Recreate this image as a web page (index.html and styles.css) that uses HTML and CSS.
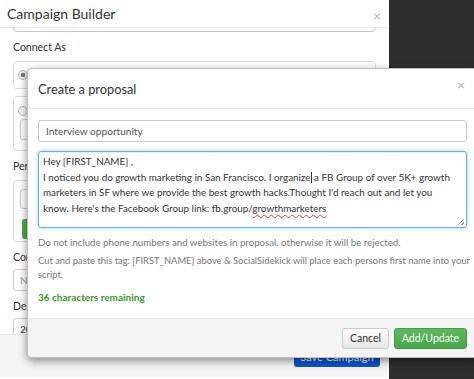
FILE: index.html
```html
<!DOCTYPE html>
<html lang="en">
<head>
    <meta charset="UTF-8">
    <title>Campaign Builder</title>
    <link rel="stylesheet" href="styles.css">
</head>
<body>
    <div class="page">
        <div class="builder">
            <div class="builder-header">
                <span class="builder-title">Campaign Builder</span>
                <span class="builder-close">&times;</span>
            </div>
            <div class="builder-body">
                <div class="box box-tail"></div>
                <div class="label">Connect As</div>
                <div class="box box-radio">
                    <span class="radio checked"></span>
                </div>
                <div class="box box-account">
                    <span class="radio"></span>
                    <div class="field">Linkedin</div>
                </div>
                <div class="label">Personalize</div>
                <div class="box box-tags">
                    <div class="field field-small">Tag</div>
                    <div class="green-small"></div>
                </div>
                <div class="label">Connect</div>
                <div class="field field-plain placeholder">Nice</div>
                <div class="label">Delay</div>
                <div class="field field-plain">20</div>
            </div>
            <div class="builder-footer">
                <button class="save-button">Save Campaign</button>
            </div>
        </div>
        <div class="dark-side"></div>
    </div>

    <div class="proposal">
        <div class="proposal-header">
            <h4>Create a proposal</h4>
            <span class="proposal-close">&times;</span>
        </div>
        <div class="proposal-body">
            <div class="input">Interview opportunity</div>
            <div class="textarea">
                Hey [FIRST_NAME] ,<br>
                I noticed you do growth marketing in San Francisco. I organize<span class="caret"></span> a FB Group of over 5K+ growth<br>
                marketers in SF where we provide the best growth hacks.Thought I'd reach out and let you<br>
                know. Here's the Facebook Group link: fb.group/<span class="misspelled">growthmarketers</span>
                <span class="grip"></span>
            </div>
            <p class="help">Do not include phone numbers and websites in proposal, otherwise it will be rejected.</p>
            <p class="help help-long">Cut and paste this tag: [FIRST_NAME] above &amp; SocialSidekick will place each persons first name into your<br>script.</p>
            <p class="remaining">36 characters remaining</p>
        </div>
        <div class="proposal-footer">
            <button class="cancel-button">Cancel</button>
            <button class="add-button">Add/Update</button>
        </div>
    </div>
</body>
</html>
```

FILE: styles.css
```css
html, body {
    margin: 0;
    height: 379px;
    overflow: hidden;
}
body {
    font-family: Lato, "Open Sans", sans-serif;
    color: #333;
    background: #2e2e2e;
}
.page {
    display: flex;
    height: 379px;
}
.builder {
    width: 389px;
    background: #fff;
    display: flex;
    flex-direction: column;
}
.builder-header {
    height: 27px;
    border-bottom: 1px solid #e8e8e8;
    display: flex;
    align-items: center;
    justify-content: space-between;
    padding: 0 8px 0 7px;
}
.builder-title {
    font-size: 14px;
}
.builder-close {
    color: #b5b5b5;
    font-size: 14px;
    margin-top: 4px;
}
.builder-body {
    flex: 1;
    overflow: hidden;
    padding: 0 13px;
}
.box {
    border: 1px solid #dcdcdc;
    border-radius: 4px;
    margin-top: 7px;
}
.box-tail {
    margin-top: -6px;
    height: 8px;
    border-color: #c8c8c8;
}
.label {
    font-size: 10.5px;
    line-height: 14px;
    margin-top: 8px;
    white-space: nowrap;
}
.box-radio {
    height: 26px;
    display: flex;
    align-items: center;
    padding-left: 4px;
}
.box-account {
    height: 55px;
    box-sizing: border-box;
    padding: 9px 6px 0 4px;
}
.radio {
    display: block;
    width: 8px;
    height: 8px;
    border-radius: 50%;
    border: 1px solid #b8b8b8;
    background: #f2f2f2;
}
.radio.checked {
    background: radial-gradient(circle, #777 0 2px, #eee 2.5px);
}
.field {
    border: 1px solid #ccc;
    border-radius: 3px;
    height: 19px;
    line-height: 19px;
    font-size: 10px;
    padding-left: 6px;
    margin-top: 3px;
    margin-left: 2px;
    white-space: nowrap;
    overflow: hidden;
}
.box-tags {
    height: 62px;
    box-sizing: border-box;
    padding: 8px 6px 0 6px;
}
.field-small {
    margin: 0;
    height: 18px;
}
.green-small {
    width: 60px;
    height: 20px;
    margin: 10px 0 0 2px;
    background: #4cae4c;
    border-radius: 3px;
}
.field-plain {
    margin: 5px 0 0 0;
    height: 20px;
    line-height: 20px;
}
.placeholder {
    color: #999;
}
.builder-footer {
    height: 42px;
    border-top: 1px solid #e5e5e5;
    background: #f5f5f5;
    display: flex;
    align-items: center;
    justify-content: flex-end;
    padding-right: 9px;
    margin-bottom: 2px;
}
.save-button {
    background: #0b55cf;
    color: #fff;
    border: none;
    border-radius: 3px;
    font-family: inherit;
    font-size: 11px;
    width: 86px;
    height: 22px;
}
.dark-side {
    flex: 1;
    background: #2e2e2e;
}

/* proposal modal */
.proposal {
    position: absolute;
    left: 27px;
    top: 68px;
    width: 449px;
    background: #fff;
    border: 1px solid rgba(0, 0, 0, 0.25);
    border-radius: 5px;
    box-shadow: 0 3px 9px rgba(0, 0, 0, 0.45);
}
.proposal-header {
    height: 39px;
    border-bottom: 1px solid #e5e5e5;
    display: flex;
    align-items: center;
    justify-content: space-between;
    padding: 0 11px 0 10px;
}
.proposal-header h4 {
    margin: 0;
    font-size: 12.8px;
    font-weight: normal;
}
.proposal-close {
    color: #b0b0b0;
    font-size: 14px;
    margin-top: -8px;
    margin-right: 1px;
}
.proposal-body {
    padding: 11px 11px 0 10px;
}
.input {
    height: 20px;
    line-height: 20px;
    border: 1px solid #ccc;
    border-radius: 3px;
    padding-left: 7px;
    font-size: 10.1px;
    color: #555;
    margin-right: -1px;
}
.textarea {
    position: relative;
    margin-top: 9px;
    height: 66px;
    border: 1px solid #66afe9;
    border-radius: 3px;
    box-shadow: inset 0 1px 1px rgba(0, 0, 0, 0.07), 0 0 4px rgba(102, 175, 233, 0.6);
    padding: 2px 4px 7px 4px;
    font-size: 9.9px;
    line-height: 15.6px;
    color: #333;
    white-space: nowrap;
    overflow: hidden;
    margin-right: -1px;
}
.caret {
    display: inline-block;
    width: 1px;
    height: 11px;
    background: #333;
    vertical-align: -2px;
}
.misspelled {
    text-decoration: underline wavy #e04040;
    text-decoration-thickness: 1px;
    text-underline-offset: 2px;
}
.grip {
    position: absolute;
    right: 2px;
    bottom: 2px;
    width: 6px;
    height: 6px;
    background: linear-gradient(135deg, transparent 45%, #999 45%, #999 55%, transparent 55%, transparent 75%, #999 75%, #999 85%, transparent 85%);
}
.help {
    margin: 7px 0 0 0;
    font-size: 9.7px;
    line-height: 14px;
    color: #777;
    white-space: nowrap;
}
.help + .help {
    margin-top: 5px;
}
.help-long {
    font-size: 9.4px;
}
.remaining {
    margin: 8px 0 0 0;
    font-size: 10px;
    line-height: 14px;
    color: #3a9a2c;
    font-weight: bold;
}
.proposal-footer {
    margin-top: 14px;
    height: 38px;
    border-top: 1px solid #e5e5e5;
    background: #f5f5f5;
    border-radius: 0 0 5px 5px;
    display: flex;
    align-items: center;
    justify-content: flex-end;
    gap: 5px;
    padding-right: 10px;
}
.cancel-button, .add-button {
    height: 21px;
    border-radius: 3px;
    font-family: inherit;
    font-size: 10.5px;
    padding: 0;
}
.cancel-button {
    width: 47px;
    color: #333;
    background: linear-gradient(#fff, #e6e6e6);
    border: 1px solid #ccc;
}
.add-button {
    width: 73px;
    color: #fff;
    background: linear-gradient(#5cb85c, #48a948);
    border: 1px solid #449d44;
}
```
